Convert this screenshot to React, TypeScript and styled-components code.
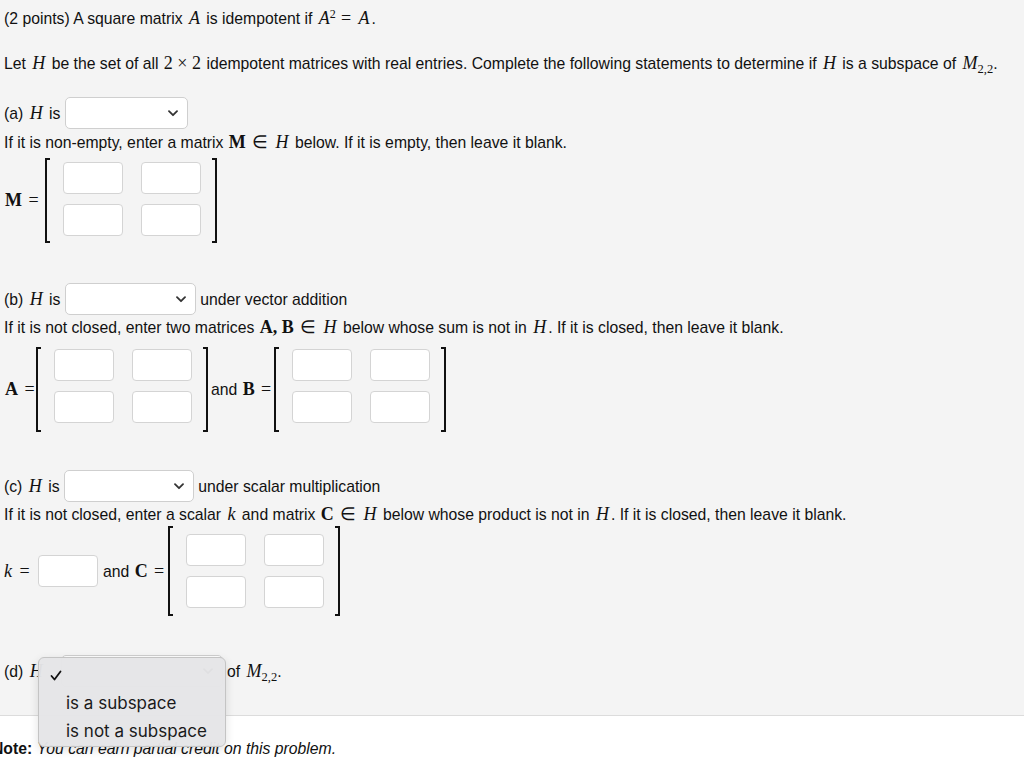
import React from "react";
import styled, { createGlobalStyle } from "styled-components";

const GlobalStyle = createGlobalStyle`
  html, body {
    margin: 0;
    padding: 0;
    background: #f4f4f4;
  }
  body {
    font-family: "Liberation Sans", Arial, sans-serif;
    font-size: 15.75px;
    color: #111;
  }
`;

const Page = styled.div`
  min-height: 100vh;
  display: flex;
  flex-direction: column;
  overflow: hidden;
`;

const Problem = styled.div`
  padding: 8px 0 0 4px;
  display: flex;
  flex-direction: column;
`;

const Line = styled.div<{ $top: number; $h?: number }>`
  display: block;
  white-space: nowrap;
  margin-top: ${(p) => p.$top}px;
  height: ${(p) => p.$h ?? 20}px;
  line-height: ${(p) => p.$h ?? 20}px;
  position: relative;
`;

const Var = styled.span`
  font-family: "Liberation Serif", "Times New Roman", serif;
  font-style: italic;
  font-size: 18px;
  margin: 0 2px;
`;

const Bold = styled.span`
  font-family: "Liberation Serif", "Times New Roman", serif;
  font-weight: bold;
  font-size: 18px;
  margin: 0 1px;
`;

const Sym = styled.span`
  font-family: "Liberation Serif", "Times New Roman", serif;
  font-size: 18px;
  margin: 0 1px;
`;

const Sup = styled.sup`
  font-family: "Liberation Serif", "Times New Roman", serif;
  font-size: 12px;
  line-height: 0;
  margin-left: -2px;
`;

const Sub = styled.sub`
  font-family: "Liberation Serif", "Times New Roman", serif;
  font-size: 12.5px;
  line-height: 0;
  margin-left: -2px;
`;

const Select = styled.span<{ $w: number; $ml?: number }>`
  display: inline-flex;
  vertical-align: top;
  width: ${(p) => p.$w}px;
  margin-left: ${(p) => p.$ml ?? 0}px;
  height: 32px;
  box-sizing: border-box;
  background: #fff;
  border: 1px solid #cfcfcf;
  border-radius: 5px;
  align-items: center;
  justify-content: flex-end;
  padding-right: 9px;
`;

const MatrixRow = styled.div<{ $top: number }>`
  display: flex;
  align-items: center;
  white-space: pre;
  margin-top: ${(p) => p.$top}px;
`;

const Label = styled.span<{ $w?: number; $pl?: number }>`
  display: inline-block;
  white-space: pre;
  min-width: ${(p) => p.$w ?? 0}px;
  padding-left: ${(p) => p.$pl ?? 0}px;
`;

const Bracket = styled.div<{ $side: "left" | "right" }>`
  width: 5px;
  align-self: stretch;
  box-sizing: border-box;
  border: 2px solid #111;
  ${(p) => (p.$side === "left" ? "border-right: none;" : "border-left: none;")}
`;

const Matrix = styled.div`
  display: flex;
  align-items: stretch;
`;

const Cells = styled.div<{ $pt: number; $pb: number }>`
  display: grid;
  grid-template-columns: 60px 60px;
  column-gap: 18px;
  row-gap: 10px;
  padding: ${(p) => p.$pt}px 11px ${(p) => p.$pb}px 13px;
`;

const Cell = styled.div`
  height: 32px;
  box-sizing: border-box;
  background: #fff;
  border: 1px solid #d4d4d4;
  border-radius: 4px;
`;

const ScalarCell = styled(Cell)`
  width: 60px;
  margin: 0 5px 0 0;
`;

const Popup = styled.div`
  position: absolute;
  left: 34px;
  top: 2px;
  width: 188px;
  height: 90px;
  box-sizing: border-box;
  background: rgba(229, 229, 231, 0.97);
  border: 1px solid #c4c4c4;
  border-radius: 6px;
  box-shadow: 0 3px 10px rgba(0, 0, 0, 0.12);
  font-family: "Inter", "Liberation Sans", sans-serif;
  font-size: 17px;
  line-height: normal;
  color: #1a1a1a;
  z-index: 5;
  padding-top: 3px;
`;

const Option = styled.div`
  height: 28px;
  display: flex;
  align-items: center;
  padding-left: 27px;
  position: relative;
`;

const Check = styled.svg`
  position: absolute;
  left: 11px;
  top: 9px;
`;

const Footer = styled.div`
  flex: 1;
  margin-top: 28px;
  background: #fff;
  border-top: 1px solid #dcdcdc;
  padding-top: 24px;
`;

const Note = styled.div`
  margin-left: -8px;
  white-space: nowrap;
  i {
    font-style: italic;
  }
`;

const Chevron = () => (
  <svg width="10" height="7" viewBox="0 0 10 7">
    <path d="M1 1.2 L5 5.2 L9 1.2" fill="none" stroke="#333" strokeWidth="1.8" strokeLinecap="round" strokeLinejoin="round" />
  </svg>
);

const H = () => <Var>H</Var>;

const Mat = ({ pt = 4, pb = 7 }: { pt?: number; pb?: number }) => (
  <Matrix>
    <Bracket $side="left" />
    <Cells $pt={pt} $pb={pb}>
      <Cell />
      <Cell />
      <Cell />
      <Cell />
    </Cells>
    <Bracket $side="right" />
  </Matrix>
);

export default function App() {
  return (
    <Page>
      <GlobalStyle />
      <Problem>
        <Line $top={0}>
          (2 points) A square matrix <Var>A</Var> is idempotent if <Var>A</Var>
          <Sup>2</Sup> <Sym>=</Sym> <Var>A</Var>.
        </Line>
        <Line $top={25}>
          Let <H /> be the set of all <Sym>2 × 2</Sym> idempotent matrices with real entries. Complete the following statements to determine if <H /> is a subspace of <Var>M</Var>
          <Sub>2,2</Sub>.
        </Line>

        <Line $top={24} $h={32}>
          (a) <H /> is{" "}
          <Select $w={123}>
            <Chevron />
          </Select>
        </Line>
        <Line $top={3}>
          If it is non-empty, enter a matrix <Bold>M</Bold> <Sym>∈</Sym> <H /> below. If it is empty, then leave it blank.
        </Line>
        <MatrixRow $top={6}>
          <Label $w={41}>
            <Bold>M</Bold> <Sym>=</Sym>
          </Label>
          <Mat />
        </MatrixRow>

        <Line $top={40} $h={32}>
          (b) <H /> is{" "}
          <Select $w={131}>
            <Chevron />
          </Select>{" "}
          under vector addition
        </Line>
        <Line $top={2}>
          If it is not closed, enter two matrices <Bold>A, B</Bold> <Sym>∈</Sym> <H /> below whose sum is not in <H />. If it is closed, then leave it blank.
        </Line>
        <MatrixRow $top={10}>
          <Label $w={32}>
            <Bold>A</Bold> <Sym>=</Sym>
          </Label>
          <Mat pt={2} pb={9} />
          <Label $w={63} $pl={3}>
            and <Bold>B</Bold> <Sym>=</Sym>
          </Label>
          <Mat pt={2} pb={9} />
        </MatrixRow>

        <Line $top={38} $h={32}>
          (c) <H /> is{" "}
          <Select $w={130}>
            <Chevron />
          </Select>{" "}
          under scalar multiplication
        </Line>
        <Line $top={2}>
          If it is not closed, enter a scalar <Var>k</Var> and matrix <Bold>C</Bold> <Sym>∈</Sym> <H /> below whose product is not in <H />. If it is closed, then leave it blank.
        </Line>
        <MatrixRow $top={2}>
          <Label $w={34}>
            <Var style={{ marginLeft: 0 }}>k</Var> <Sym>=</Sym>
          </Label>
          <ScalarCell />
          <Label $w={65}>
            and <Bold>C</Bold> <Sym>=</Sym>
          </Label>
          <Mat pt={8} pb={8} />
        </MatrixRow>

        <Line $top={39} $h={32}>
          (d) <H />
          <Select $w={162} $ml={16}>
            <Chevron />
          </Select>{" "}
          of <Var>M</Var>
          <Sub>2,2</Sub>.
          <Popup>
            <Option>
              <Check width="12" height="11" viewBox="0 0 12 11">
                <path d="M1.5 6 L4.5 9.5 L10.5 1.5" fill="none" stroke="#111" strokeWidth="1.8" strokeLinecap="round" strokeLinejoin="round" />
              </Check>
            </Option>
            <Option>is a subspace</Option>
            <Option>is not a subspace</Option>
          </Popup>
        </Line>
      </Problem>
      <Footer>
        <Note>
          <b>Note:</b> <i>You can earn partial credit on this problem.</i>
        </Note>
      </Footer>
    </Page>
  );
}
